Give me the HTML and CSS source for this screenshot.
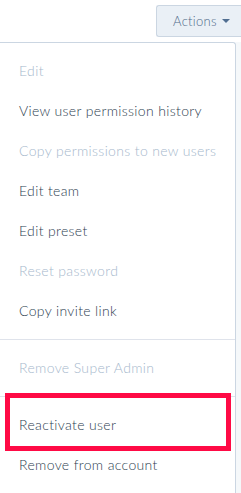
FILE: index.html
```html
<!DOCTYPE html>
<html>
<head>
<meta charset="utf-8">
<link rel="stylesheet" href="styles.css">
</head>
<body>
<div class="topbar">
  <button class="actions">Actions <span class="caret"></span></button>
</div>
<div class="main">
  <div class="menu">
    <ul class="group">
      <li class="item disabled">Edit</li>
      <li class="item">View user permission history</li>
      <li class="item disabled">Copy permissions to new users</li>
      <li class="item">Edit team</li>
      <li class="item">Edit preset</li>
      <li class="item disabled">Reset password</li>
      <li class="item">Copy invite link</li>
    </ul>
    <ul class="group">
      <li class="item disabled">Remove Super Admin</li>
    </ul>
    <ul class="group">
      <li class="item highlighted">Reactivate user<span class="callout"></span></li>
      <li class="item">Remove from account</li>
    </ul>
  </div>
  <div class="side"></div>
</div>
</body>
</html>
```

FILE: styles.css
```css
* { box-sizing: border-box; }
html, body { margin: 0; padding: 0; }
body {
  width: 241px;
  height: 493px;
  overflow: hidden;
  background: #ffffff;
  font-family: "Lato", "Open Sans", sans-serif;
  color: #33475b;
}
.topbar {
  height: 42px;
  display: flex;
  padding: 5px 0 0 156px;
  overflow: hidden;
}
.actions {
  height: 32px;
  width: 85px;
  flex: none;
  margin: 0;
  padding: 0 0 0 16px;
  text-align: left;
  background: #eaf0f6;
  border: 1px solid #cbd6e2;
  border-right: none;
  border-radius: 3px 0 0 3px;
  color: #4f6a88;
  font-family: inherit;
  font-size: 13px;
  font-weight: 300;
  letter-spacing: 0.3px;
  display: flex;
  align-items: center;
  gap: 5px;
}
.caret {
  width: 0;
  height: 0;
  border-left: 4px solid transparent;
  border-right: 4px solid transparent;
  border-top: 4px solid #506e91;
}
.main {
  display: flex;
}
.menu {
  width: 236px;
  flex: none;
  background: #ffffff;
  border: 1px solid #cbd6e2;
  border-left: none;
  border-bottom: none;
  border-radius: 0 3px 0 0;
}
.side {
  flex: 1;
  background: #f5f8fa;
}
.group {
  list-style: none;
  margin: 0;
  padding: 8px 0;
}
.group + .group {
  border-top: 1px solid #dfe3eb;
}
.item {
  position: relative;
  height: 40px;
  line-height: 40px;
  padding-left: 19px;
  font-size: 14px;
  font-weight: 300;
  letter-spacing: 0.35px;
  color: #2d3e50;
  white-space: nowrap;
}
.item.disabled {
  color: #a6b8cc;
}
.callout {
  position: absolute;
  left: 5px;
  right: 4px;
  top: -12px;
  bottom: -6px;
  border: 5px solid #ff0a45;
}
```
